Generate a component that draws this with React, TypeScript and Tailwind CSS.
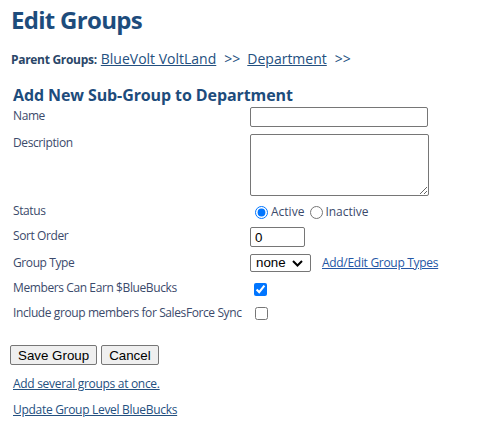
import React from "react";

function Row({ label, top, h, children, ctrl }: { label: string; top: string; h: string; children?: React.ReactNode; ctrl?: string }) {
  return (
    <div className={`flex items-start ${top} ${h}`}>
      <div className="w-[237px] shrink-0 leading-[18px] text-[12px] text-[#3b4a6b] whitespace-nowrap tracking-[-0.4px]">{label}</div>
      <div className={`flex items-start ${ctrl ?? ""}`}>{children}</div>
    </div>
  );
}

export default function App() {
  return (
    <div className="w-[492px] h-[446px] bg-white font-['Open_Sans',sans-serif] text-[#3b4a6b] overflow-hidden">
      <div className="pl-[11px] pt-[5px]">
        <h1 className="text-[24px] font-bold text-[#1d4c7c] leading-[30px] tracking-[-0.7px]">Edit Groups</h1>
        <div className="mt-[15px] flex items-baseline text-[12px] leading-[18px]">
          <span className="font-bold text-[#2a4668] tracking-[-0.3px]">Parent Groups:</span>
          <a className="ml-[4px] underline text-[14px] text-[#24507f]" href="#">BlueVolt VoltLand</a>
          <span className="ml-[8px] text-[14px] text-[#24507f]">&gt;&gt;</span>
          <a className="ml-[7px] underline text-[14px] text-[#24507f]" href="#">Department</a>
          <span className="ml-[8px] text-[14px] text-[#24507f]">&gt;&gt;</span>
        </div>
      </div>
      <div className="pl-[13px]">
        <h2 className="mt-[16px] text-[16px] font-bold text-[#1d4c7c] leading-[20px] tracking-[-0.1px]">Add New Sub-Group to Department</h2>
        <Row label="Name" top="mt-[2px]" h="h-[20px]">
          <input className="w-[178px] h-[20px] border border-[#767676] rounded-[2px] bg-white px-[2px] font-['Liberation_Sans'] text-[13.33px]" />
        </Row>
        <Row label="Description" top="mt-[7px]" h="h-[62px]">
          <textarea className="w-[179px] h-[62px] border border-[#767676] rounded-[2px] bg-white block" />
        </Row>
        <Row label="Status" top="mt-[6px]" h="h-[22px]" ctrl="items-center">
          <label className="flex items-center mt-[2px] text-[12px] text-[#3b4a6b] leading-[16px]">
            <input type="radio" name="st" defaultChecked className="w-[13px] h-[13px] ml-[5px] mr-[3px] accent-[#0075ff]" />
            Active
          </label>
          <label className="flex items-center mt-[2px] text-[12px] text-[#3b4a6b] leading-[16px] ml-[6px]">
            <input type="radio" name="st" className="w-[13px] h-[13px] mr-[2px]" />
            Inactive
          </label>
        </Row>
        <Row label="Sort Order" top="mt-[3px]" h="h-[20px]">
          <input defaultValue="0" className="w-[55px] h-[20px] border border-[#767676] rounded-[2px] bg-white px-[4px] font-['Liberation_Sans'] text-[13.33px] text-black" />
        </Row>
        <Row label="Group Type" top="mt-[7px]" h="h-[18px]" ctrl="items-center">
          <div className="relative w-[61px] h-[18px]">
            <select className="appearance-none w-[61px] h-[18px] border border-[#767676] rounded-[2px] bg-white font-['Liberation_Sans'] text-[13.33px] leading-[16px] text-black pl-[5px] block">
              <option>none</option>
            </select>
            <svg className="absolute right-[8px] top-[6px] pointer-events-none" width="11" height="7" viewBox="0 0 11 7">
              <path d="M1 1 L5.5 5.5 L10 1" fill="none" stroke="#000" strokeWidth="2" />
            </svg>
          </div>
          <a href="#" className="ml-[11px] underline text-[12px] text-[#2457a5] leading-[18px] tracking-[-0.3px]">Add/Edit Group Types</a>
        </Row>
        <Row label="Members Can Earn $BlueBucks" top="mt-[7px]" h="h-[20px]">
          <input type="checkbox" defaultChecked className="w-[13px] h-[13px] ml-[4px] mt-[4px] accent-[#0075ff]" />
        </Row>
        <Row label="Include group members for SalesForce Sync" top="mt-[5px]" h="h-[20px]">
          <input type="checkbox" className="w-[13px] h-[13px] ml-[5px] mt-[3px]" />
        </Row>
      </div>
      <div className="pl-[10px] mt-[21px] flex gap-[4px]">
        <button className="h-[20px] px-[7px] border border-[#767676] rounded-[2px] bg-[#efefef] font-['Liberation_Sans'] text-[13.33px] text-black">Save Group</button>
        <button className="h-[20px] px-[7px] border border-[#767676] rounded-[2px] bg-[#efefef] font-['Liberation_Sans'] text-[13.33px] text-black">Cancel</button>
      </div>
      <div className="pl-[13px] mt-[10px] text-[12px] leading-[18px] tracking-[-0.3px]">
        <a href="#" className="block underline text-[#24507f]">Add several groups at once.</a>
        <a href="#" className="block mt-[8px] underline text-[#24507f]">Update Group Level BlueBucks</a>
      </div>
    </div>
  );
}
